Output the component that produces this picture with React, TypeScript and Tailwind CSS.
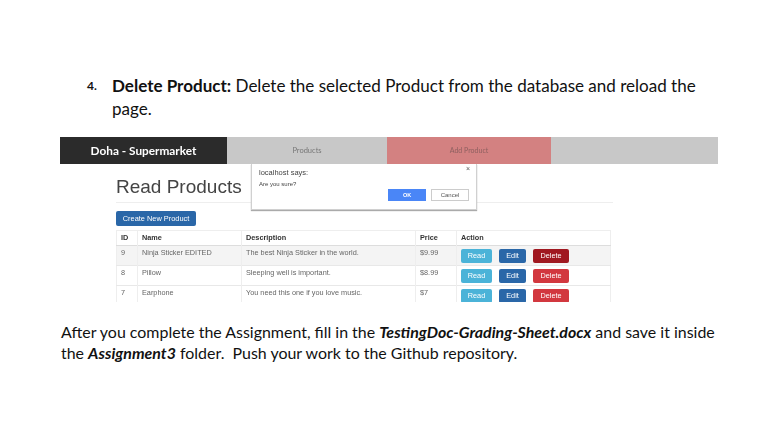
const rows = [
  { id: '9', name: 'Ninja Sticker EDITED', desc: 'The best Ninja Sticker in the world.', price: '$9.99', del: 'bg-[#a01820]', bg: 'bg-[#f4f4f4]' },
  { id: '8', name: 'Pillow', desc: 'Sleeping well is important.', price: '$8.99', del: 'bg-[#d2383f]', bg: 'bg-white' },
  { id: '7', name: 'Earphone', desc: 'You need this one if you love music.', price: '$7', del: 'bg-[#d2383f]', bg: 'bg-white' },
]

function Navbar() {
  return (
    <div className="flex h-[27px] bg-[#c8c8c8] font-['Lato',sans-serif]">
      <div className="w-[167px] bg-[#2b2b2b] text-white text-[11.8px] font-bold flex items-center justify-center">Doha - Supermarket</div>
      <div className="w-[160px] text-[#777] text-[7.5px] flex items-center justify-center">Products</div>
      <div className="w-[164px] bg-[#d38181] text-[#8f6060] text-[7px] flex items-center justify-center">Add Product</div>
    </div>
  )
}

function ConfirmDialog() {
  return (
    <div className="absolute left-[191px] top-[27px] w-[226px] h-[46px] bg-white border border-t-0 border-[#d0d0d0] shadow-[0_1px_1px_#aaa] font-['Liberation_Sans',sans-serif]">
      <span className="absolute right-[6px] top-[0px] text-[7px] text-[#555]">×</span>
      <p className="pl-[7px] pt-[4px] text-[7.5px] leading-[9px] text-[#444]">localhost says:</p>
      <p className="pl-[7px] pt-[3px] text-[6px] leading-[8px] text-[#444]">Are you sure?</p>
      <div className="flex justify-end gap-[5px] pr-[7px] pt-[1px]">
        <div className="w-[38px] h-[12px] bg-[#4a86f7] text-white text-[5.5px] font-bold flex items-center justify-center">OK</div>
        <div className="w-[38px] h-[12px] bg-white border border-[#ccc] text-[#555] text-[6px] flex items-center justify-center">Cancel</div>
      </div>
    </div>
  )
}

function ProductTable() {
  return (
    <table className="mt-[4px] w-[495px] table-fixed border-collapse border border-[#eee] text-[7.3px] text-[#666]">
      <colgroup>
        <col className="w-[21px]" />
        <col className="w-[104px]" />
        <col className="w-[174px]" />
        <col className="w-[41px]" />
        <col />
      </colgroup>
      <thead>
        <tr className="h-[15px] text-[#333] font-bold text-left border-b border-[#ddd]">
          <th className="pl-[4px] border-r border-[#eee]">ID</th>
          <th className="pl-[4px] border-r border-[#eee]">Name</th>
          <th className="pl-[4px] border-r border-[#eee]">Description</th>
          <th className="pl-[4px] border-r border-[#eee]">Price</th>
          <th className="pl-[4px]">Action</th>
        </tr>
      </thead>
      <tbody>
        {rows.map(r => (
          <tr key={r.id} className={`h-[20px] ${r.bg} border-b border-[#e8e8e8] align-top`}>
            <td className="pl-[4px] pt-[2px] border-r border-[#eee]">{r.id}</td>
            <td className="pl-[4px] pt-[2px] border-r border-[#eee]">{r.name}</td>
            <td className="pl-[4px] pt-[2px] border-r border-[#eee]">{r.desc}</td>
            <td className="pl-[4px] pt-[2px] border-r border-[#eee]">{r.price}</td>
            <td className="pl-[4px] pt-[3px]">
              <div className="flex gap-[7px] text-white">
                <div className="w-[31px] h-[14px] rounded-[2px] bg-[#4bb3d8] flex items-center justify-center">Read</div>
                <div className="w-[27px] h-[14px] rounded-[2px] bg-[#2a67a8] flex items-center justify-center">Edit</div>
                <div className={`w-[36px] h-[14px] rounded-[2px] ${r.del} flex items-center justify-center`}>Delete</div>
              </div>
            </td>
          </tr>
        ))}
      </tbody>
    </table>
  )
}

export default function App() {
  return (
    <div className="w-[769px] h-[426px] bg-white overflow-hidden font-['Lato',sans-serif] text-[#111]">
      <div className="pt-[74px] pl-[87px] flex">
        <span className="w-[25px] text-[12px] leading-[23px] font-bold">4.</span>
        <p className="w-[590px] text-[17.05px] leading-[23px]">
          <b>Delete Product:</b> Delete the selected Product from the database and reload the page.
        </p>
      </div>

      {/* Captura do navegador */}
      <div className="relative mt-[17px] ml-[60px] w-[658px] h-[165px] overflow-hidden blur-[0.35px]">
        <Navbar />
        <ConfirmDialog />
        <div className="pl-[56px] font-['Liberation_Sans',sans-serif]">
          <h1 className="pt-[12px] text-[19px] leading-[22px] text-[#444]">Read Products</h1>
          <div className="mt-[4px] w-[497px] border-t border-[#eee]" />
          <div className="mt-[8px] w-[80px] h-[15px] rounded-[2px] bg-[#2a67a8] text-white text-[7.4px] flex items-center justify-center">Create New Product</div>
          <ProductTable />
        </div>
      </div>

      <p className="mt-[19px] ml-[61px] w-[668px] text-[15.95px] leading-[21px]">
        After you complete the Assignment, fill in the <b><i>TestingDoc-Grading-Sheet.docx</i></b> and save it inside the <b><i>Assignment3</i></b> folder.&nbsp; Push your work to the Github repository.
      </p>
    </div>
  )
}
